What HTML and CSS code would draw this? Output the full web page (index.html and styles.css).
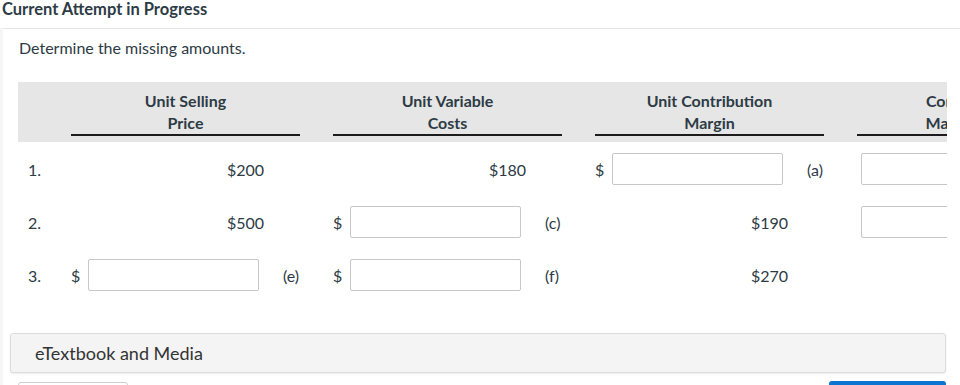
FILE: index.html
```html
<!DOCTYPE html>
<html lang="en">

<head>
    <meta charset="UTF-8">
    <meta name="viewport" content="width=device-width, initial-scale=1.0">
    <title>Question - Current Attempt</title>
    <link rel="stylesheet" href="styles.css">
</head>

<body>
    <h1 class="attempt-title">Current Attempt in Progress</h1>

    <div class="question">
        <div class="question-inner">
            <p class="prompt">Determine the missing amounts.</p>

            <div class="table-wrap">
                <div class="grid head">
                    <div class="num"></div>
                    <div class="col-title"><span>Unit Selling<br>Price</span></div>
                    <div class="col-title"><span>Unit Variable<br>Costs</span></div>
                    <div class="col-title"><span>Unit Contribution<br>Margin</span></div>
                    <div class="col-title"><span>Contribution<br>Margin Ratio</span></div>
                </div>

                <div class="rows">
                    <div class="grid row">
                        <div class="num">1.</div>
                        <div class="cell"><span class="amount">$200</span></div>
                        <div class="cell"><span class="amount">$180</span></div>
                        <div class="cell">
                            <span class="cur">$</span>
                            <input class="field" type="text">
                            <span class="tag">(a)</span>
                        </div>
                        <div class="cell">
                            <span class="cur blank"></span>
                            <input class="field" type="text">
                            <span class="tag">%</span>
                        </div>
                    </div>

                    <div class="grid row">
                        <div class="num">2.</div>
                        <div class="cell"><span class="amount">$500</span></div>
                        <div class="cell">
                            <span class="cur">$</span>
                            <input class="field" type="text">
                            <span class="tag">(c)</span>
                        </div>
                        <div class="cell"><span class="amount">$190</span></div>
                        <div class="cell">
                            <span class="cur blank"></span>
                            <input class="field" type="text">
                            <span class="tag">%</span>
                        </div>
                    </div>

                    <div class="grid row">
                        <div class="num">3.</div>
                        <div class="cell">
                            <span class="cur">$</span>
                            <input class="field" type="text">
                            <span class="tag">(e)</span>
                        </div>
                        <div class="cell">
                            <span class="cur">$</span>
                            <input class="field" type="text">
                            <span class="tag">(f)</span>
                        </div>
                        <div class="cell"><span class="amount">$270</span></div>
                        <div class="cell"></div>
                    </div>
                </div>
            </div>

            <div class="media-box">eTextbook and Media</div>

            <div class="actions">
                <button class="btn-outline">Save for Later</button>
                <button class="btn-primary">Submit Answer</button>
            </div>
        </div>
    </div>
</body>

</html>
```

FILE: styles.css
```css
body {
    font-family: 'Lato', 'Open Sans', sans-serif;
    margin: 0;
    padding: 0;
    background: #fff;
    color: #2d3b45;
    overflow: hidden;
}

.attempt-title {
    margin: 0;
    padding: 0 0 0 2px;
    height: 28px;
    font-size: 16.5px;
    line-height: 18px;
    font-weight: 700;
    color: #2d3b45;
}

.question {
    border-left: 3px solid #f6f6f6;
}

.question-inner {
    border-top: 1px solid #e6e6e6;
}

.prompt {
    margin: 0;
    padding: 9px 0 0 16px;
    font-size: 16px;
    line-height: 19px;
}

.table-wrap {
    margin: 25px 13px 0 15px;
    overflow: hidden;
}

.grid {
    display: grid;
    grid-template-columns: 20px repeat(4, 229px);
    column-gap: 33px;
}

.head {
    width: 1100px;
    background-color: #e6e6e6;
    padding: 8px 0 6px;
}

.col-title {
    text-align: center;
    font-size: 16px;
    font-weight: 700;
    line-height: 22px;
    border-bottom: 2px solid #1c1c1c;
    white-space: nowrap;
}

.rows {
    padding-top: 11px;
    display: flex;
    flex-direction: column;
    gap: 21px;
    width: 1100px;
}

.row {
    height: 32px;
    align-items: center;
    font-size: 16px;
}

.num {
    padding-left: 10px;
}

.cell {
    display: flex;
    align-items: center;
}

.cur {
    flex: 0 0 17px;
}

.cur.blank {
    flex-basis: 4px;
}

.field {
    flex: 0 0 171px;
    width: 171px;
    height: 32px;
    box-sizing: border-box;
    border: 1px solid #c7c7c7;
    border-radius: 2px;
    background: #fff;
    margin: 0;
}

.tag {
    padding-left: 24px;
}

.amount {
    flex: 0 0 193px;
    text-align: right;
}

.media-box {
    margin: 42px 14px 0 7px;
    height: 38px;
    line-height: 38px;
    padding-left: 24px;
    background-color: #f4f4f4;
    border: 1px solid #dcdcdc;
    border-radius: 3px;
    box-shadow: 0 1px 2px rgba(0, 0, 0, 0.08);
    font-size: 18px;
    color: #333;
}

.actions {
    display: flex;
    justify-content: space-between;
    align-items: flex-start;
    margin: 8px 14px 0 15px;
}

.btn-outline {
    width: 110px;
    height: 36px;
    margin-top: 1px;
    border: 1px solid #cfcfcf;
    border-radius: 3px;
    background: #fff;
    font-family: inherit;
    font-size: 15px;
    color: #2d3b45;
}

.btn-primary {
    width: 117px;
    height: 36px;
    border: none;
    border-radius: 3px;
    background-color: #0c75d1;
    color: white;
    font-family: inherit;
    font-size: 15px;
}
```
